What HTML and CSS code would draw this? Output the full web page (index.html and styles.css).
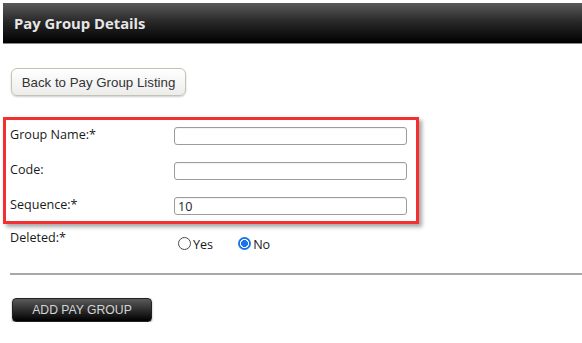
FILE: index.html
```html
<!DOCTYPE html>
<html>
<head>
<meta charset="utf-8">
<link rel="stylesheet" href="styles.css">
</head>
<body>
<div class="page">
  <div class="header"><h1 class="title">Pay Group Details</h1></div>
  <div class="content">
    <button class="back-btn">Back to Pay Group Listing</button>
    <div class="highlight">
      <div class="row">
        <label class="label">Group Name:*</label>
        <input class="field" type="text" value="">
      </div>
      <div class="row">
        <label class="label">Code:</label>
        <input class="field" type="text" value="">
      </div>
      <div class="row">
        <label class="label">Sequence:*</label>
        <input class="field" type="text" value="10">
      </div>
    </div>
    <div class="row deleted-row">
      <label class="label">Deleted:*</label>
      <div class="radios">
        <label class="radio"><span class="dot"></span><span class="radio-text">Yes</span></label>
        <label class="radio"><span class="dot checked"></span><span class="radio-text">No</span></label>
      </div>
    </div>
    <hr class="divider">
    <button class="add-btn">ADD PAY GROUP</button>
  </div>
</div>
</body>
</html>
```

FILE: styles.css
```css
html, body { margin: 0; padding: 0; background: #fff; }
body { font-family: "Open Sans", "Noto Sans", sans-serif; color: #1a1a1a; }
.page { padding: 3px 0 0 3px; }
.header {
  height: 40px;
  background: linear-gradient(#5a5a5a 0%, #2a2a2a 45%, #000 100%);
  border-bottom: 1px solid #888;
  display: flex;
  align-items: center;
  padding-left: 11px;
}
.title {
  margin: 0;
  font-size: 14.8px;
  font-weight: 700;
  color: #e6e6e6;
}
.content { padding: 24px 0 0 0; }
.back-btn {
  margin-left: 8px;
  height: 28px;
  width: 175px;
  padding: 0;
  font-family: "Liberation Sans", Arial, sans-serif;
  font-size: 13.3px;
  color: #333;
  background: linear-gradient(#ffffff, #ececec);
  border: 1px solid #c4c4b0;
  border-radius: 6px;
  box-shadow: 0 1px 2px rgba(0,0,0,0.2);
  display: block;
}
.highlight {
  margin-top: 21px;
  width: 406px;
  border: 3px solid #f42f31;
  box-shadow: 3px 3px 4px rgba(0,0,0,0.35);
  padding: 7px 0 6px 4px;
  box-sizing: content-box;
}
.row {
  display: flex;
  align-items: flex-start;
  height: 18px;
}
.highlight .row + .row { margin-top: 17px; }
.label {
  width: 164px;
  font-size: 12.6px;
  line-height: 16px;
}
.field {
  width: 233px;
  height: 18px;
  box-sizing: border-box;
  border: 1px solid #9c9c9c;
  border-radius: 3px;
  padding: 0 3px;
  font-family: "Open Sans", sans-serif;
  font-size: 12.6px;
  color: #222;
  box-shadow: inset 0 1px 1px rgba(0,0,0,0.05);
}
.deleted-row { margin-top: 6px; padding-left: 7px; height: 22px; }
.deleted-row .label { width: 168px; }
.radios { display: flex; gap: 25px; padding-top: 5px; }
.radio { display: flex; align-items: center; font-size: 12.6px; line-height: 14px; }
.radio-text { padding-top: 3px; }
.dot {
  width: 13px; height: 13px; box-sizing: border-box;
  border: 1px solid #4a4a4a; border-radius: 50%;
  margin-right: 2px; background: #fff;
}
.dot.checked {
  border: none;
  background: radial-gradient(circle, #1a73e8 0 3.2px, #fff 3.7px 4.3px, #1a73e8 4.8px);
}
.divider {
  margin: 21px 0 0 7px;
  border: 0;
  border-top: 2px solid #a8a8a8;
}
.add-btn {
  margin: 23px 0 0 9px;
  display: block;
  width: 140px;
  height: 24px;
  padding: 0;
  font-family: "Liberation Sans", Arial, sans-serif;
  font-size: 12.2px;
  color: #d4d4d4;
  background: linear-gradient(#5a5a5a, #000);
  border: 1px solid #222;
  border-radius: 4px;
  box-shadow: 0 1px 2px rgba(0,0,0,0.4);
}
```
